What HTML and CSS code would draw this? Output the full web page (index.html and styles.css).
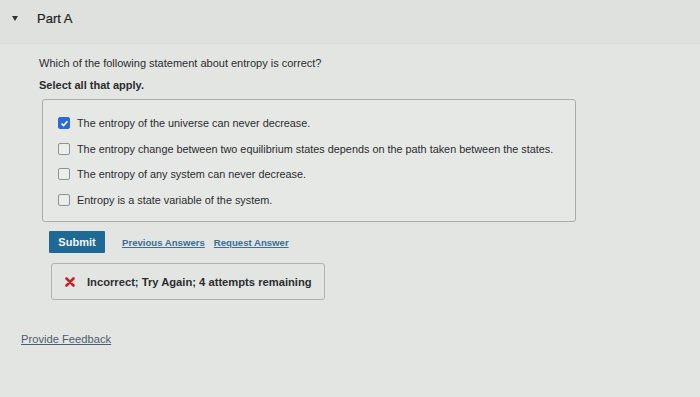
FILE: index.html
```html
<!DOCTYPE html>
<html>
<head>
<meta charset="utf-8">
<link rel="stylesheet" href="styles.css">
</head>
<body>
<div class="page">
  <div class="header">
    <span class="caret"></span>
    <span class="part-title">Part A</span>
  </div>
  <div class="content">
    <p class="question">Which of the following statement about entropy is correct?</p>
    <p class="instruction">Select all that apply.</p>
    <div class="choices">
      <label class="choice"><span class="box checked"><svg viewBox="0 0 10 10" width="9" height="9"><path d="M1.8 5.2 L4 7.3 L8.3 2.5" fill="none" stroke="#fff" stroke-width="1.8"/></svg></span><span>The entropy of the universe can never decrease.</span></label>
      <label class="choice"><span class="box"></span><span>The entropy change between two equilibrium states depends on the path taken between the states.</span></label>
      <label class="choice"><span class="box"></span><span>The entropy of any system can never decrease.</span></label>
      <label class="choice"><span class="box"></span><span>Entropy is a state variable of the system.</span></label>
    </div>
    <div class="actions">
      <button class="submit">Submit</button>
      <a class="link" href="#">Previous Answers</a>
      <a class="link" href="#">Request Answer</a>
    </div>
    <div class="feedback">
      <svg class="xmark" viewBox="0 0 10 10" width="10" height="10"><path d="M1.5 1.5 L8.5 8.5 M8.5 1.5 L1.5 8.5" stroke="#c8202a" stroke-width="2.6" stroke-linecap="round"/></svg>
      <span>Incorrect; Try Again; 4 attempts remaining</span>
    </div>
  </div>
  <a class="provide" href="#">Provide Feedback</a>
</div>
</body>
</html>
```
FILE: styles.css
```css
html, body {
  margin: 0;
  padding: 0;
}
body {
  background: #e3e5e3;
  font-family: "Liberation Sans", Arial, sans-serif;
  color: #2a2c2e;
  width: 700px;
  height: 397px;
  overflow: hidden;
}
.page {
  display: flex;
  flex-direction: column;
}
.header {
  height: 44px;
  background: #dfe1df;
  display: flex;
  align-items: center;
  padding-left: 12px;
  box-sizing: border-box;
  border-bottom: 1px solid #d8dad8;
}
.caret {
  width: 0;
  height: 0;
  border-left: 3.5px solid transparent;
  border-right: 3.5px solid transparent;
  border-top: 5px solid #333;
  margin-top: -6px;
}
.part-title {
  font-size: 13px;
  margin-left: 19px;
  margin-top: -6px;
  color: #1e1f20;
  -webkit-text-stroke: 0.2px #1e1f20;
}
.content {
  padding-left: 39px;
  display: flex;
  flex-direction: column;
  align-items: flex-start;
}
.question {
  margin: 13px 0 0;
  font-size: 11px;
}
.instruction {
  margin: 10px 0 0;
  font-size: 11px;
  font-weight: bold;
}
.choices {
  margin: 8px 0 0 3px;
  width: 534px;
  height: 123px;
  box-sizing: border-box;
  border: 1px solid #a9acad;
  border-radius: 3px;
  padding: 15px 0 0 15px;
  display: flex;
  flex-direction: column;
  gap: 9.7px;
  background: #e6e8e6;
}
.choice {
  display: flex;
  align-items: center;
  font-size: 10.85px;
  height: 16px;
}
.box {
  width: 10px;
  height: 10px;
  border: 1px solid #8e9294;
  border-radius: 2px;
  background: #eceeec;
  margin-right: 7px;
  display: flex;
  align-items: center;
  justify-content: center;
  flex-shrink: 0;
}
.box.checked {
  background: #2e6bd0;
  border-color: #2e6bd0;
}
.actions {
  margin: 9px 0 0 10px;
  display: flex;
  align-items: center;
}
.submit {
  background: #1f6a95;
  color: #f4f6f8;
  border: none;
  border-radius: 1px;
  font-family: "Liberation Sans", Arial, sans-serif;
  font-weight: bold;
  font-size: 11px;
  width: 56px;
  height: 22px;
  padding: 0;
}
.link {
  color: #3c6e96;
  font-weight: bold;
  font-size: 9.6px;
  margin-left: 17px;
  text-decoration: underline;
}
.link + .link {
  margin-left: 9px;
}
.feedback {
  margin: 10px 0 0 12px;
  width: 274px;
  height: 37px;
  box-sizing: border-box;
  border: 1px solid #b0b3b4;
  border-radius: 3px;
  display: flex;
  align-items: center;
  padding-left: 13px;
  font-weight: bold;
  font-size: 11.2px;
  color: #2b2d2f;
}
.xmark {
  margin-right: 12px;
}
.provide {
  margin: 33px 0 0 21px;
  font-size: 11.2px;
  color: #4d5d6d;
  text-decoration: underline;
}
```
